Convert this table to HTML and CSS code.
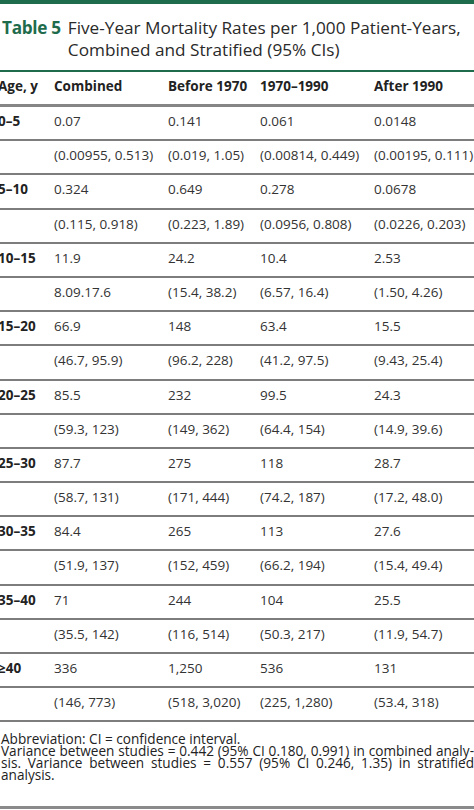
FILE: index.html
```html
<!DOCTYPE html>
<html>
<head>
<meta charset="utf-8">
<link rel="stylesheet" href="styles.css">
</head>
<body>
<div class="topbar"></div>
<div class="caption">
  <span class="label">Table 5</span>
  <span class="title">Five-Year Mortality Rates per 1,000 Patient-Years, Combined and Stratified (95% CIs)</span>
</div>
<table class="data">
  <colgroup>
    <col class="c1"><col class="c2"><col class="c3"><col class="c4"><col class="c5">
  </colgroup>
  <thead>
    <tr><th>Age, y</th><th>Combined</th><th>Before 1970</th><th>1970–1990</th><th>After 1990</th></tr>
  </thead>
  <tbody>
    <tr><td class="age">0–5</td><td>0.07</td><td>0.141</td><td>0.061</td><td>0.0148</td></tr>
    <tr><td></td><td>(0.00955, 0.513)</td><td>(0.019, 1.05)</td><td>(0.00814, 0.449)</td><td>(0.00195, 0.111)</td></tr>
    <tr><td class="age">5–10</td><td>0.324</td><td>0.649</td><td>0.278</td><td>0.0678</td></tr>
    <tr><td></td><td>(0.115, 0.918)</td><td>(0.223, 1.89)</td><td>(0.0956, 0.808)</td><td>(0.0226, 0.203)</td></tr>
    <tr><td class="age">10–15</td><td>11.9</td><td>24.2</td><td>10.4</td><td>2.53</td></tr>
    <tr><td></td><td>8.09.17.6</td><td>(15.4, 38.2)</td><td>(6.57, 16.4)</td><td>(1.50, 4.26)</td></tr>
    <tr><td class="age">15–20</td><td>66.9</td><td>148</td><td>63.4</td><td>15.5</td></tr>
    <tr><td></td><td>(46.7, 95.9)</td><td>(96.2, 228)</td><td>(41.2, 97.5)</td><td>(9.43, 25.4)</td></tr>
    <tr><td class="age">20–25</td><td>85.5</td><td>232</td><td>99.5</td><td>24.3</td></tr>
    <tr><td></td><td>(59.3, 123)</td><td>(149, 362)</td><td>(64.4, 154)</td><td>(14.9, 39.6)</td></tr>
    <tr><td class="age">25–30</td><td>87.7</td><td>275</td><td>118</td><td>28.7</td></tr>
    <tr><td></td><td>(58.7, 131)</td><td>(171, 444)</td><td>(74.2, 187)</td><td>(17.2, 48.0)</td></tr>
    <tr><td class="age">30–35</td><td>84.4</td><td>265</td><td>113</td><td>27.6</td></tr>
    <tr><td></td><td>(51.9, 137)</td><td>(152, 459)</td><td>(66.2, 194)</td><td>(15.4, 49.4)</td></tr>
    <tr><td class="age">35–40</td><td>71</td><td>244</td><td>104</td><td>25.5</td></tr>
    <tr><td></td><td>(35.5, 142)</td><td>(116, 514)</td><td>(50.3, 217)</td><td>(11.9, 54.7)</td></tr>
    <tr><td class="age">≥40</td><td>336</td><td>1,250</td><td>536</td><td>131</td></tr>
    <tr><td></td><td>(146, 773)</td><td>(518, 3,020)</td><td>(225, 1,280)</td><td>(53.4, 318)</td></tr>
  </tbody>
</table>
<div class="notes">
  <p>Abbreviation: CI = confidence interval.</p>
  <p>Variance between studies = 0.442 (95% CI 0.180, 0.991) in combined analy&shy;sis. Variance between studies = 0.557 (95% CI 0.246, 1.35) in stratified analysis.</p>
</div>
<div class="endrule"></div>
</body>
</html>
```
FILE: styles.css
```css
html, body {
  margin: 0;
  padding: 0;
  background: #ffffff;
}
body {
  width: 474px;
  overflow: hidden;
  font-family: "Open Sans", "Noto Sans", sans-serif;
  color: #2b2b2b;
}
.topbar {
  height: 4px;
  background: #1f6c4c;
}
.caption {
  display: flex;
  gap: 7px;
  margin-top: 13px;
  padding: 0 0 9px 2px;
  border-bottom: 2px solid #1f6c4c;
  font-size: 17.2px;
  line-height: 22px;
}
.label {
  flex: none;
  font-weight: 700;
  color: #1f6c4c;
  letter-spacing: -0.3px;
}
.title {
  color: #2a2a2a;
}
.data {
  border-collapse: collapse;
  table-layout: fixed;
  width: 476px;
  margin-left: -2px;
  font-size: 13.5px;
  line-height: 18px;
}
.c1 { width: 56px; }
.c2 { width: 114px; }
.c3 { width: 92px; }
.c4 { width: 114px; }
.c5 { width: 100px; }
.data th, .data td {
  text-align: left;
  padding: 5px 0 9.2px 0;
  white-space: nowrap;
  overflow: visible;
  vertical-align: top;
}
.data th {
  font-weight: 700;
  color: #222;
  padding: 5px 0 9px 0;
  border-bottom: 3px solid #858585;
}
.data td {
  color: #333;
  border-bottom: 2px solid #7d7d7d;
}
.data td.age {
  font-weight: 700;
  color: #222;
}
.notes {
  padding: 11px 0 0 1px;
  font-size: 13.6px;
  line-height: 12px;
  color: #222;
  height: 84px;
  box-sizing: border-box;
}
.notes p {
  margin: 0;
  text-align: justify;
  hyphens: manual;
}
.endrule {
  height: 3px;
  background: #8a8a8a;
}
```
